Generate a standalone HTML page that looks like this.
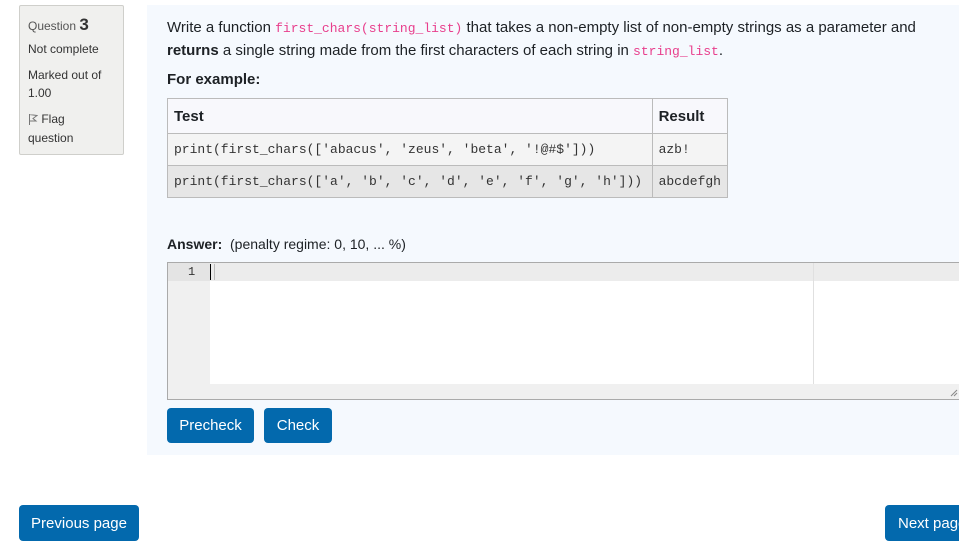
<!DOCTYPE html>
<html><head><meta charset="utf-8"><style>
body{margin:0;width:959px;height:539px;overflow:hidden;background:#fff;font-family:"Liberation Sans",sans-serif;color:#1d2125;position:relative}
.side{position:absolute;left:19px;top:5px;width:103px;height:148px;background:#f0f0ee;border:1px solid #cfcfcb;border-radius:2px;font-size:12px;color:#333}
.side div{position:absolute;left:8px}
.panel{position:absolute;left:147px;top:5px;width:812px;height:450px;background:#f5f9fe}
.abs{position:absolute}
code{font-family:"Liberation Mono",monospace;color:#e83e8c;font-size:13px}
table{border-collapse:collapse;font-size:13px}
td,th{border:1px solid #bbb;padding:0 6px;text-align:left}
.mono{font-family:"Liberation Mono",monospace;font-size:13px;color:#333}
.btn{position:absolute;color:#fff;font-size:15px;border-radius:4px;display:flex;align-items:center;justify-content:center;background:#0369ad}
</style></head><body>
<div class="side">
<div style="top:9px;font-size:12px;color:#555">Question <b style="font-size:17px;color:#333">3</b></div>
<div style="top:36px">Not complete</div>
<div style="top:62px">Marked out of</div>
<div style="top:80px">1.00</div>
<div style="top:106px"><svg width="10" height="12" viewBox="0 0 10 12" style="vertical-align:-2px"><path d="M1.5 1V12M1.5 1.5L9 2.5 5 5.5 8 8 1.5 8" fill="none" stroke="#777" stroke-width="1"/></svg> Flag</div>
<div style="top:125px">question</div>
</div>
<div class="panel"></div>
<div class="abs" style="left:167px;top:17px;font-size:15px;line-height:22px;width:780px">Write a function <code>first_chars(string_list)</code> that takes a non-empty list of non-empty strings as a parameter and <b>returns</b> a single string made from the first characters of each string in <code>string_list</code>.</div>
<div class="abs" style="left:167px;top:71px;font-size:15px;font-weight:bold">For example:</div>
<table class="abs" style="left:167px;top:98px;width:561px">
<tr style="height:35px;background:#f8f8fc"><th style="font-size:15px;width:472px">Test</th><th style="font-size:15px">Result</th></tr>
<tr style="height:32px;background:#f4f4f4"><td class="mono">print(first_chars(['abacus', 'zeus', 'beta', '!@#$']))</td><td class="mono">azb!</td></tr>
<tr style="height:32px;background:#e6e6e6"><td class="mono">print(first_chars(['a', 'b', 'c', 'd', 'e', 'f', 'g', 'h']))</td><td class="mono">abcdefgh</td></tr>
</table>
<div class="abs" style="left:167px;top:236px;font-size:14px"><b>Answer:</b>&nbsp; (penalty regime: 0, 10, ... %)</div>
<div class="abs" style="left:167px;top:262px;width:792px;height:136px;border:1px solid #aaa;border-right:none;background:#f0f0f0">
<div class="abs" style="left:42px;top:0;right:0;height:18px;background:#ececec"></div>
<div class="abs" style="left:0;top:0;width:42px;height:18px;background:#e4e4e4"></div>
<div class="abs" style="left:42px;top:18px;right:0;height:103px;background:#fff"></div>
<div class="abs" style="left:645px;top:0;width:1px;height:121px;background:#e0e0e0"></div>
<div class="abs mono" style="left:20px;top:2px;font-size:12px">1</div>
<div class="abs" style="left:42px;top:1px;width:1px;height:16px;background:#000"></div>
<div class="abs" style="left:46px;top:1px;width:1px;height:16px;background:#bbb"></div>
<svg class="abs" style="right:2px;bottom:2px" width="8" height="8"><path d="M7 1L1 7M7 4L4 7" stroke="#888"/></svg>
</div>
<div class="btn" style="left:167px;top:408px;width:87px;height:35px">Precheck</div>
<div class="btn" style="left:264px;top:408px;width:68px;height:35px">Check</div>
<div class="btn" style="left:19px;top:505px;width:120px;height:36px">Previous page</div>
<div class="btn" style="left:885px;top:505px;width:100px;height:36px;justify-content:flex-start;padding-left:13px;box-sizing:border-box">Next page</div>
</body></html>
